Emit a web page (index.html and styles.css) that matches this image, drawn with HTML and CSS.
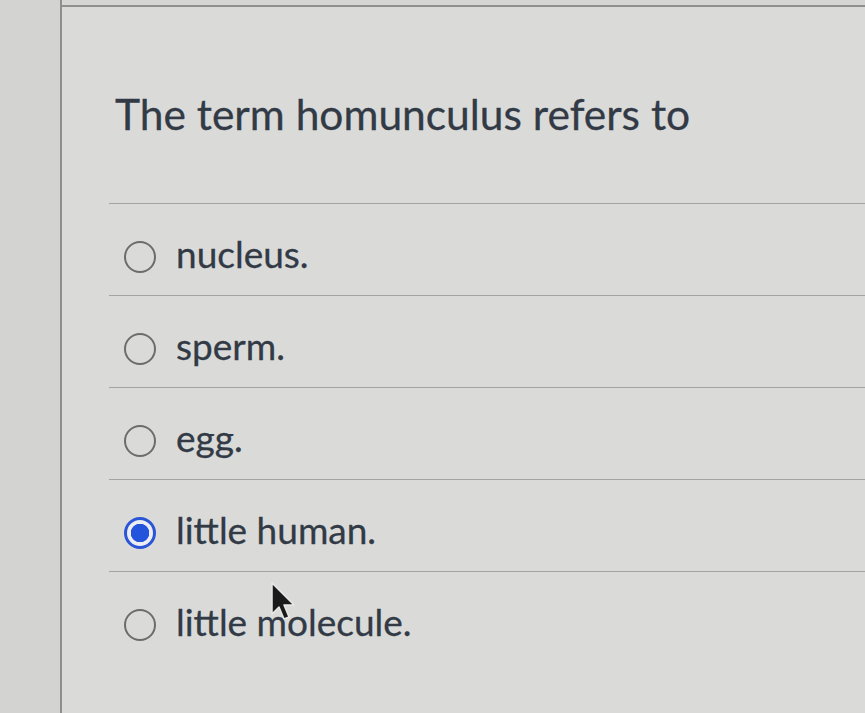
FILE: index.html
```html
<!DOCTYPE html>
<html>
<head>
<meta charset="utf-8">
<link rel="stylesheet" href="styles.css">
</head>
<body>
<div class="page">
  <aside class="sidebar"></aside>
  <main class="main">
    <div class="content">
      <div class="question">The term homunculus refers to</div>
      <div class="options">
        <label class="option"><span class="radio"></span><span class="label">nucleus.</span></label>
        <label class="option"><span class="radio"></span><span class="label">sperm.</span></label>
        <label class="option"><span class="radio"></span><span class="label">egg.</span></label>
        <label class="option"><span class="radio checked"></span><span class="label">little human.</span></label>
        <label class="option last"><span class="radio"></span><span class="label">little molecule.</span></label>
      </div>
    </div>
    <svg class="cursor" width="28" height="40" viewBox="0 0 28 40">
      <path d="M2 1 L2 32 L9 25 L14 37 L19 35 L14 23 L24 23 Z" fill="#1a1a1a" stroke="#e8e8e8" stroke-width="1.5" stroke-linejoin="round"/>
    </svg>
  </main>
</div>
</body>
</html>
```

FILE: styles.css
```css
html, body {
  margin: 0;
  padding: 0;
}
body {
  background: #d6d7d5;
  font-family: Lato, "Open Sans", sans-serif;
  color: #323a46;
  overflow: hidden;
}
.page {
  display: flex;
  width: 865px;
  height: 713px;
}
.sidebar {
  width: 60px;
  flex: none;
  background: #d3d4d2;
  border-right: 2px solid #8d8e8e;
}
.main {
  position: relative;
  flex: 1;
  margin-top: 5px;
  border-top: 2px solid #8f9090;
  background: #dadbd9;
}
.content {
  padding-left: 47px;
}
.question {
  font-size: 42.5px;
  padding-left: 6px;
  padding-top: 82px;
  height: 114px;
  line-height: 50px;
  border-bottom: 1px solid #a4a5a3;
  -webkit-text-stroke: 0.3px #323a46;
}
.option {
  display: flex;
  align-items: center;
  height: 82px;
  padding-top: 9px;
  border-bottom: 1px solid #a4a5a3;
  font-size: 37px;
  line-height: 44px;
  -webkit-text-stroke: 0.3px #323a46;
}
.option.last {
  border-bottom: none;
}
.radio {
  flex: none;
  box-sizing: border-box;
  width: 32px;
  height: 32px;
  margin-left: 15px;
  margin-right: 20px;
  border-radius: 50%;
  border: 2.5px solid #6b6c6c;
  margin-top: 6px;
}
.radio.checked {
  border: 3px solid #2a55d6;
  background: radial-gradient(circle, #2453dc 0 9px, #ecedf2 9.5px 100%);
}
.cursor {
  position: absolute;
  left: 208px;
  top: 575px;
}
```
